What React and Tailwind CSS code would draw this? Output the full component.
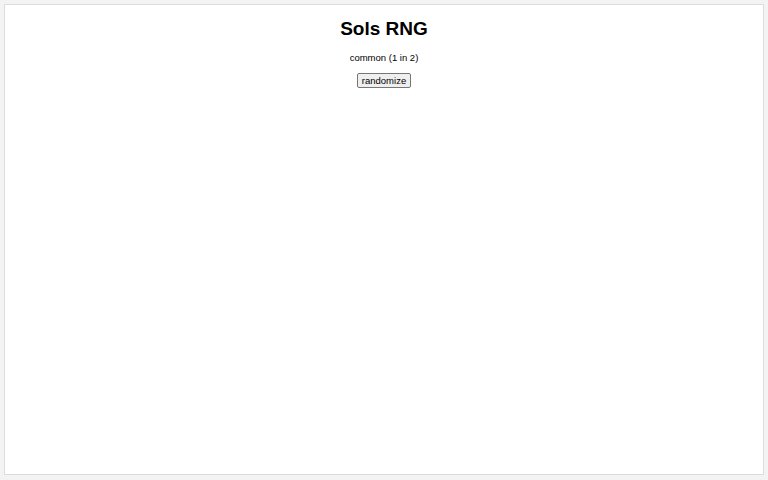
export default function App() {
  return (
    <div className="w-[768px] h-[480px] bg-[#f3f3f3] p-1 font-['Liberation_Sans',Arial,sans-serif]">
      <div className="h-[471px] bg-white border border-[#dcdcdc] flex flex-col items-center">
        <h1 className="mt-[12px] text-[19px] leading-[24px] font-bold text-black">Sols RNG</h1>
        <p className="mt-[11px] text-[9.5px] leading-[12px] text-black">common (1 in 2)</p>
        <button className="mt-[9px] h-[15px] px-[4px] text-[9.5px] leading-[12px] text-black bg-[#efefef] border border-[#767676] rounded-[2px]">
          randomize
        </button>
      </div>
    </div>
  );
}
